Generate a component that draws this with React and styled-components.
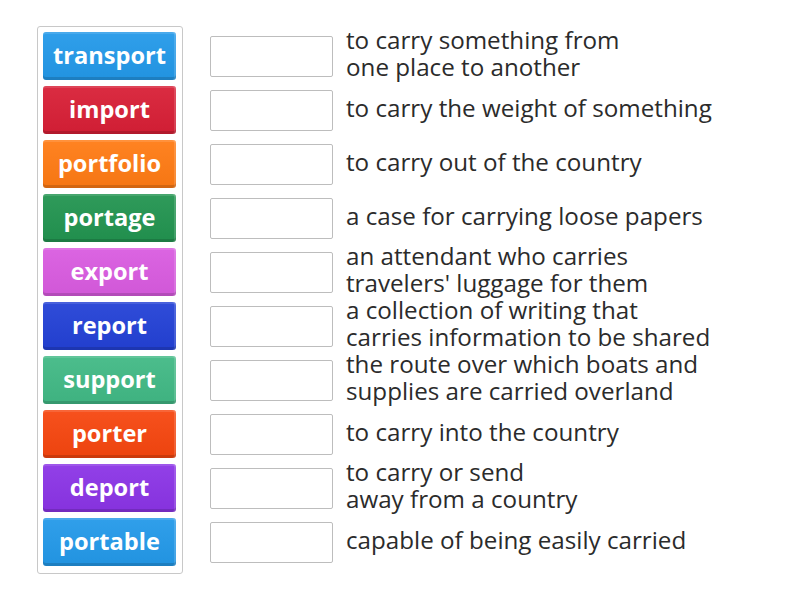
import React from 'react';
import styled, { createGlobalStyle } from 'styled-components';

const GlobalStyle = createGlobalStyle`
  body {
    margin: 0;
    background: #fff;
    font-family: "Open Sans", "DejaVu Sans", sans-serif;
  }
`;

const words = [
  { label: 'transport', color: '#2399e9' },
  { label: 'import', color: '#d81f36' },
  { label: 'portfolio', color: '#ff7b14' },
  { label: 'portage', color: '#229450' },
  { label: 'export', color: '#d95be0' },
  { label: 'report', color: '#2341d6' },
  { label: 'support', color: '#41b985' },
  { label: 'porter', color: '#f6460f' },
  { label: 'deport', color: '#8b34e6' },
  { label: 'portable', color: '#2399e9' },
];

const definitions = [
  ['to carry something from', 'one place to another'],
  ['to carry the weight of something'],
  ['to carry out of the country'],
  ['a case for carrying loose papers'],
  ['an attendant who carries', "travelers' luggage for them"],
  ['a collection of writing that', 'carries information to be shared'],
  ['the route over which boats and', 'supplies are carried overland'],
  ['to carry into the country'],
  ['to carry or send', 'away from a country'],
  ['capable of being easily carried'],
];

const App = () => (
  <>
    <GlobalStyle />
    <StyledPage>
      <StyledWordPanel>
        {words.map((w) => (
          <StyledWord key={w.label} $color={w.color}>
            {w.label}
          </StyledWord>
        ))}
      </StyledWordPanel>
      <StyledTargets>
        {definitions.map((lines, i) => (
          <StyledRow key={i}>
            <StyledSlot />
            <StyledDefinition>
              {lines.map((l, j) => (
                <div key={j}>{l}</div>
              ))}
            </StyledDefinition>
          </StyledRow>
        ))}
      </StyledTargets>
    </StyledPage>
  </>
);

const StyledPage = styled.div`
  display: flex;
  align-items: flex-start;
  padding: 26px 0 0 37px;
`;

const StyledWordPanel = styled.div`
  display: flex;
  flex-direction: column;
  gap: 6px;
  width: 133px;
  padding: 5px 6px 7px 5px;
  border: 1px solid #c8c8c8;
  border-radius: 3px;
`;

const StyledWord = styled.div`
  height: 48px;
  display: flex;
  align-items: center;
  justify-content: center;
  border-radius: 3px;
  background: linear-gradient(to bottom, rgba(255, 255, 255, 0.06), rgba(0, 0, 0, 0.04)),
    ${(p) => p.$color};
  box-shadow: inset 0 -3px 0 rgba(0, 0, 0, 0.14), inset -2px 0 0 rgba(255, 255, 255, 0.15),
    inset 0 2px 0 rgba(255, 255, 255, 0.12);
  color: #fff;
  font-weight: 700;
  font-size: 23.6px;
  padding-bottom: 3px;
  box-sizing: border-box;
`;

const StyledTargets = styled.div`
  display: flex;
  flex-direction: column;
  margin-left: 27px;
  padding-top: 6px;
`;

const StyledRow = styled.div`
  height: 54px;
  display: flex;
  align-items: center;
`;

const StyledSlot = styled.div`
  width: 121px;
  height: 39px;
  flex-shrink: 0;
  border: 1px solid #bdbdbd;
  border-radius: 2px;
  background: #fff;
  margin-top: -6px;
`;

const StyledDefinition = styled.div`
  margin-left: 13px;
  margin-top: -12px;
  font-size: 24.2px;
  line-height: 27px;
  color: #2b2b2b;
  white-space: nowrap;
`;

export default App;
